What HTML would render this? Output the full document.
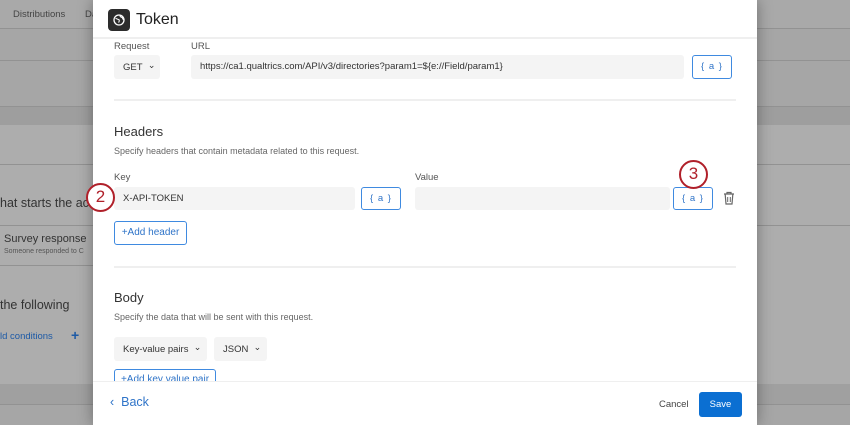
<!DOCTYPE html>
<html><head><meta charset="utf-8"><style>
*{box-sizing:border-box;margin:0;padding:0}
body{width:850px;height:425px;overflow:hidden;position:relative;background:#a6a6a6;font-family:"Liberation Sans",sans-serif;color:#2a2a2a}
.abs{position:absolute}
.ln{position:absolute;height:1px;background:#929292}
.modal{position:absolute;left:93px;top:0;width:664px;height:425px;background:#fff;box-shadow:0 0 14px rgba(0,0,0,.35);overflow:hidden}
.lbl{position:absolute;font-size:9.5px;color:#555}
.inp{position:absolute;background:#f4f4f4;border-radius:3px;font-size:9.5px;color:#333;line-height:23px;padding-left:9px}
.var{position:absolute;width:40px;height:23px;border:1px solid #3f8ae0;border-radius:3px;color:#2f74c8;font-size:9.5px;text-align:center;line-height:21px;letter-spacing:1px}
.hr{position:absolute;left:21px;width:622px;height:2px;background:#efefef}
.h{position:absolute;font-size:13px;color:#333}
.sub{position:absolute;font-size:9px;color:#666}
.btn{position:absolute;border:1px solid #3f8ae0;border-radius:3px;color:#2f74c8;font-size:10px;text-align:center}
.circ{position:absolute;width:29px;height:29px;border:2.5px solid #b0202a;border-radius:50%;background:#fff;color:#b0202a;font-size:17px;text-align:center;line-height:24px}
.chev{font-size:9px;display:inline-block;transform:translateY(-2px)}
</style></head><body>
<div class="abs" style="left:0;top:0;width:850px;height:28px;background:#a9a9a9"></div>
<div class="abs" style="left:13px;top:9px;font-size:9.5px;color:#444">Distributions</div>
<div class="abs" style="left:85px;top:9px;font-size:9.5px;color:#444">Da</div>
<div class="ln" style="left:0;top:28px;width:850px"></div>
<div class="ln" style="left:0;top:60px;width:850px"></div>
<div class="ln" style="left:0;top:106px;width:850px"></div>
<div class="abs" style="left:0;top:107px;width:850px;height:18px;background:#9e9e9e"></div>
<div class="abs" style="left:0;top:125px;width:850px;height:260px;background:#adadad"></div>
<div class="ln" style="left:0;top:164px;width:850px"></div>
<div class="ln" style="left:0;top:225px;width:850px"></div>
<div class="ln" style="left:0;top:265px;width:93px"></div>
<div class="abs" style="left:0;top:384px;width:850px;height:20px;background:#a0a0a0"></div>
<div class="ln" style="left:0;top:404px;width:850px"></div>
<div class="abs" style="left:0;top:196px;font-size:12.5px;color:#333">hat starts the actio</div>
<div class="abs" style="left:4px;top:233px;font-size:11px;color:#333">Survey response</div>
<div class="abs" style="left:4px;top:248px;font-size:7px;color:#555">Someone responded to C</div>
<div class="abs" style="left:0;top:298px;font-size:12.5px;color:#333">the following</div>
<div class="abs" style="left:0;top:331px;font-size:9.5px;color:#1d5aa6">ld conditions</div>
<div class="abs" style="left:71px;top:327px;font-size:14px;color:#1d5aa6;font-weight:bold">+</div>

<div class="modal">
  <div class="abs" style="left:15px;top:9px;width:22px;height:22px;background:#2c2c2c;border-radius:4px">
    <svg width="22" height="22" viewBox="0 0 22 22"><circle cx="11" cy="11" r="5" fill="none" stroke="#fff" stroke-width="1.3"/><path d="M7.5 9.5c1.5 0 2 1 3 1s1 2 0 3M12 6.5c0 1.5 1 1.5 2 2s.5 2 1.5 2" fill="none" stroke="#fff" stroke-width="1.1"/></svg>
  </div>
  <div class="abs" style="left:43px;top:11px;font-size:16px;color:#222">Token</div>
  <div class="abs" style="left:0;top:37px;width:664px;height:2px;background:#efefef"></div>

  <div class="lbl" style="left:21px;top:41px">Request</div>
  <div class="lbl" style="left:98px;top:41px">URL</div>
  <div class="inp" style="left:21px;top:55px;width:46px;height:24px;line-height:24px">GET&nbsp; <span class="chev">&#8964;</span></div>
  <div class="inp" style="left:98px;top:55px;width:493px;height:24px;line-height:24px">https://ca1.qualtrics.com/API/v3/directories?param1=${e://Field/param1}</div>
  <div class="var" style="left:599px;top:55px;width:40px;height:24px;line-height:22px">{ a }</div>
  <div class="hr" style="top:99px"></div>

  <div class="h" style="left:21px;top:124px">Headers</div>
  <div class="sub" style="left:21px;top:146px">Specify headers that contain metadata related to this request.</div>
  <div class="lbl" style="left:21px;top:172px">Key</div>
  <div class="lbl" style="left:322px;top:172px">Value</div>
  <div class="inp" style="left:21px;top:187px;width:241px;height:23px">X-API-TOKEN</div>
  <div class="var" style="left:268px;top:187px">{ a }</div>
  <div class="inp" style="left:322px;top:187px;width:255px;height:23px"></div>
  <div class="var" style="left:580px;top:187px">{ a }</div>
  <svg class="abs" style="left:630px;top:191px" width="12" height="14" viewBox="0 0 12 14"><path d="M1 3h10M4 3V1.5h4V3M2.2 3.5l.8 9.5h6l.8-9.5" fill="none" stroke="#666" stroke-width="1.2"/><path d="M4.7 6v5M7.3 6v5" stroke="#666" stroke-width="1"/></svg>
  <div class="btn" style="left:21px;top:221px;width:73px;height:24px;line-height:22px">+Add header</div>
  <div class="hr" style="top:266px"></div>

  <div class="h" style="left:21px;top:290px">Body</div>
  <div class="sub" style="left:21px;top:312px">Specify the data that will be sent with this request.</div>
  <div class="inp" style="left:21px;top:337px;width:93px;height:24px;line-height:24px">Key-value pairs&nbsp; <span class="chev">&#8964;</span></div>
  <div class="inp" style="left:121px;top:337px;width:53px;height:24px;line-height:24px">JSON&nbsp; <span class="chev">&#8964;</span></div>
  <div class="btn" style="left:21px;top:369px;width:102px;height:24px;line-height:20px">+Add key value pair</div>

  <div class="abs" style="left:0;top:381px;width:664px;height:44px;background:#fff;border-top:1px solid #efefef"></div>
  <div class="abs" style="left:17px;top:395px;font-size:12.5px;color:#2f74c8">&#8249;&nbsp; Back</div>
  <div class="abs" style="left:566px;top:399px;font-size:9.5px;color:#444">Cancel</div>
  <div class="abs" style="left:606px;top:392px;width:43px;height:25px;background:#0b6fd2;border-radius:3px;color:#fff;font-size:9.5px;text-align:center;line-height:25px">Save</div>
</div>

<div class="circ" style="left:86px;top:183px">2</div>
<div class="circ" style="left:679px;top:160px">3</div>
</body></html>
